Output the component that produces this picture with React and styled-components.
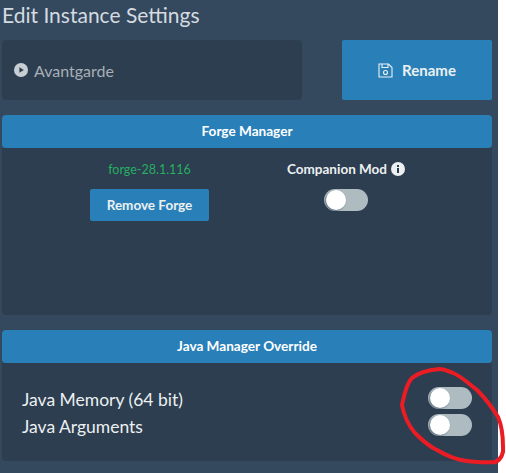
import React from 'react';
import styled, { createGlobalStyle } from 'styled-components';

const Global = createGlobalStyle`
  html, body {
    margin: 0;
    padding: 0;
    background: #fff;
  }
  body {
    font-family: "Lato", "Open Sans", sans-serif;
  }
`;

const Page = styled.div`
  position: relative;
  box-sizing: border-box;
  width: 498px;
  height: 473px;
  padding: 0 6px 0 2px;
  overflow: visible;
  background: #34495e;
`;

const Title = styled.h1`
  margin: 0;
  height: 40px;
  font-size: 21px;
  line-height: 30px;
  font-weight: 400;
  color: #d5dbe0;
`;

const NameRow = styled.div`
  display: flex;
  justify-content: space-between;
  height: 60px;
  margin-bottom: 15px;
`;

const NameField = styled.div`
  display: flex;
  align-items: center;
  gap: 6px;
  box-sizing: border-box;
  width: 300px;
  padding-left: 12px;
  border-radius: 4px;
  background: #2c3e50;
  color: #a9afb6;
  font-size: 16px;
`;

const PlayIcon = styled.svg`
  width: 14px;
  height: 14px;
  flex: none;
`;

const RenameButton = styled.div`
  display: flex;
  align-items: center;
  justify-content: center;
  gap: 9px;
  width: 150px;
  border-radius: 2px;
  background: #2980b9;
  color: #ecf0f1;
  font-size: 15px;
  font-weight: 700;
`;

const SaveIcon = styled.svg`
  width: 15px;
  height: 15px;
  flex: none;
  fill: none;
  stroke: #ecf0f1;
  stroke-width: 1.1;
`;

const SectionHeader = styled.div`
  display: flex;
  align-items: center;
  justify-content: center;
  height: 33px;
  padding-bottom: 1px;
  box-sizing: border-box;
  border-radius: 4px;
  background: #2980b9;
  color: #fff;
  font-size: 13.6px;
  font-weight: 700;
`;

const Panel = styled.div`
  box-sizing: border-box;
  height: ${(p) => p.$height}px;
  margin-bottom: ${(p) => p.$gap || 0}px;
  border-radius: 0 0 4px 4px;
  background: #2c3e50;
`;

const ForgeColumns = styled.div`
  display: grid;
  grid-template-columns: 295px 98px;
  padding-top: 12px;
`;

const Column = styled.div`
  display: flex;
  flex-direction: column;
  align-items: center;
`;

const ForgeVersion = styled.div`
  height: 28px;
  padding-top: 1px;
  font-size: 12.5px;
  line-height: 17px;
  color: #27ae60;
`;

const RemoveButton = styled.div`
  display: flex;
  align-items: center;
  justify-content: center;
  width: 119px;
  height: 32px;
  border-radius: 2px;
  background: #2980b9;
  color: #ecf0f1;
  font-size: 13.5px;
  font-weight: 700;
`;

const CompanionLabel = styled.div`
  display: flex;
  align-items: center;
  gap: 4px;
  height: 29px;
  padding-bottom: 12px;
  box-sizing: border-box;
  font-size: 13.5px;
  font-weight: 700;
  white-space: nowrap;
  color: #ecf0f1;
`;

const InfoIcon = styled.svg`
  width: 14px;
  height: 14px;
  flex: none;
`;

const Track = styled.div`
  position: relative;
  width: 44px;
  height: 22px;
  border-radius: 11px;
  background: #aebbc1;
`;

const Knob = styled.div`
  position: absolute;
  top: 1px;
  left: 2px;
  width: 20px;
  height: 20px;
  border-radius: 50%;
  background: #fff;
  box-shadow: -1px 1px 2px rgba(44, 62, 80, 0.6);
`;

const JavaRows = styled.div`
  display: flex;
  flex-direction: column;
  gap: 5px;
  padding: 24px 20px 0;
`;

const JavaRow = styled.div`
  display: flex;
  align-items: center;
  justify-content: space-between;
  height: 22px;
  font-size: 17.5px;
  color: #ecf0f1;
`;

const JavaLabel = styled.span`
  padding-top: 2px;
`;

const Scribble = styled.svg`
  position: absolute;
  top: 0;
  left: 0;
  width: 506px;
  height: 473px;
  pointer-events: none;
`;

const Toggle = () => (
  <Track>
    <Knob />
  </Track>
);

export default function App() {
  return (
    <Page>
      <Global />
      <Title>Edit Instance Settings</Title>
      <NameRow>
        <NameField>
          <PlayIcon viewBox="0 0 14 14">
            <circle cx="7" cy="7" r="7" fill="#c9ced3" />
            <path d="M5.4 4.2 L9.8 7 L5.4 9.8 Z" fill="#2c3e50" />
          </PlayIcon>
          Avantgarde
        </NameField>
        <RenameButton>
          <SaveIcon viewBox="0 0 15 15">
            <path d="M1 1 H10.5 L14 4.5 V14 H1 Z" />
            <path d="M4 1 V4.5 H10 V1" />
            <circle cx="7.5" cy="9.5" r="2" />
          </SaveIcon>
          Rename
        </RenameButton>
      </NameRow>

      <SectionHeader>Forge Manager</SectionHeader>
      <Panel $height={167} $gap={15}>
        <ForgeColumns>
          <Column>
            <ForgeVersion>forge-28.1.116</ForgeVersion>
            <RemoveButton>Remove Forge</RemoveButton>
          </Column>
          <Column>
            <CompanionLabel>
              Companion Mod
              <InfoIcon viewBox="0 0 14 14">
                <circle cx="7" cy="7" r="7" fill="#ecf0f1" />
                <rect x="6" y="6" width="2" height="5" fill="#2c3e50" />
                <rect x="6" y="3" width="2" height="2" fill="#2c3e50" />
              </InfoIcon>
            </CompanionLabel>
            <Toggle />
          </Column>
        </ForgeColumns>
      </Panel>

      <SectionHeader>Java Manager Override</SectionHeader>
      <Panel $height={98}>
        <JavaRows>
          <JavaRow>
            <JavaLabel>Java Memory (64 bit)</JavaLabel>
            <Toggle />
          </JavaRow>
          <JavaRow>
            <JavaLabel>Java Arguments</JavaLabel>
            <Toggle />
          </JavaRow>
        </JavaRows>
      </Panel>

      <Scribble viewBox="0 0 506 473">
        <path
          d="M439 369 C428 370 418 373 412 378 C406 384 404 396 402 405 C404 416 409 426 415 433 C423 441 430 447 437 450 C447 456 458 460 467 461 C478 462 488 463 495 462 C501 460 504 453 503 447 C503 436 502 426 498 417 C492 407 485 398 477 390 C468 383 461 376 453 373 C448 371 444 369 439 369 Z"
          fill="none"
          stroke="#ec1c24"
          strokeWidth="4"
        />
      </Scribble>
    </Page>
  );
}
